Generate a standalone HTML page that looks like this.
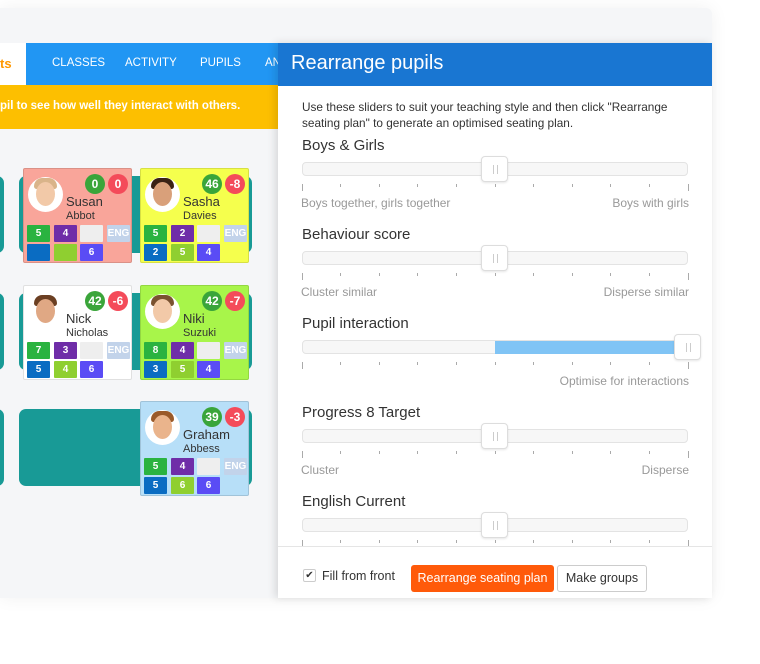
<!DOCTYPE html>
<html><head><meta charset="utf-8"><style>
*{box-sizing:border-box;margin:0;padding:0}
body{width:760px;height:664px;background:#fff;font-family:"Liberation Sans",sans-serif;position:relative;overflow:hidden}
.win{position:absolute;left:0;top:8px;width:712px;height:590px;background:#f5f6f8;box-shadow:0 0 18px rgba(0,0,0,.06);border-radius:0 6px 0 0;overflow:hidden}
.nav{position:absolute;left:0;top:35px;width:712px;height:42px;background:#2196f3}
.nav span{position:absolute;top:14px;color:#fff;font-size:11.5px}
.tab{position:absolute;left:0;top:35px;width:26px;height:42px;background:#fff;color:#ff9800;font-weight:bold;font-size:13px;padding:13px 0 0 0}
.banner{position:absolute;left:0;top:77px;width:280px;height:44px;background:#fdbf00;color:#fff;font-weight:bold;font-size:11.5px;padding:15px 0 0 0;white-space:nowrap}
.tbl{position:absolute;background:#189a96;border-radius:7px}
.card{position:absolute;width:109px;height:95px;border:1px solid rgba(0,0,0,.12);border-radius:2px}
.av{position:absolute;left:4px;top:8px;width:35px;height:35px;border-radius:50%;background:#fff;overflow:hidden}
.av i{position:absolute;left:8px;top:5px;width:19px;height:24px;border-radius:50%;background:#f2c9a8}
.av b{position:absolute;left:6px;top:1px;width:23px;height:11px;border-radius:12px 12px 4px 4px}
.bd{position:absolute;top:5px;width:20px;height:20px;border-radius:50%;color:#fff;font-size:12px;text-align:center;line-height:20px;font-weight:bold}
.g{background:#3aa53a;left:61px}.r{background:#f44b5a;left:84px}
.nm{position:absolute;left:42px;top:25px;font-size:13px;color:#333}
.sn{position:absolute;left:42px;top:41px;font-size:11px;color:#333}
.t{position:absolute;width:23px;height:17px;color:#fff;font-size:10px;font-weight:bold;text-align:center;line-height:17px;border-radius:1px}
.modal{position:absolute;left:278px;top:43px;width:434px;height:555px;background:#fff;box-shadow:-3px 0 8px rgba(0,0,0,.12)}
.mh{height:43px;background:#1976d2;color:#fff;font-size:20px;padding:9px 0 0 13px}
.txt{position:absolute;left:24px;font-size:11.8px;color:#333;line-height:16px}
.h{position:absolute;left:24px;font-size:15px;color:#333}
.tr{position:absolute;left:24px;width:386px;height:14px;background:#f7f7f7;border:1px solid #e3e3e3;border-radius:4px}
.hd{position:absolute;width:27px;height:26px;background:#fff;border:1px solid #ddd;border-radius:4px;box-shadow:0 1px 2px rgba(0,0,0,.1)}
.hd:after{content:"";position:absolute;left:11px;top:8px;width:3px;height:9px;border-left:1px solid #ccc;border-right:1px solid #ccc}
.tk{position:absolute;left:24px;width:388px;height:7px}
.tk s{position:absolute;top:0;width:1px;height:3px;background:#aaa}
.lb{position:absolute;font-size:12px;color:#999}
</style></head><body>
<div class="win">
<div class="nav"><span style="left:52px">CLASSES</span><span style="left:125px">ACTIVITY</span><span style="left:200px">PUPILS</span><span style="left:265px">AN</span></div>
<div class="tab">ts</div>
<div class="banner">pil to see how well they interact with others.</div>
</div>
<div class="tbl" style="left:-10px;top:176px;width:14px;height:77px"></div>
<div class="tbl" style="left:-10px;top:293px;width:14px;height:77px"></div>
<div class="tbl" style="left:-10px;top:409px;width:14px;height:77px"></div>
<div class="tbl" style="left:19px;top:176px;width:233px;height:77px"></div>
<div class="tbl" style="left:19px;top:293px;width:233px;height:77px"></div>
<div class="tbl" style="left:19px;top:409px;width:233px;height:77px"></div>

<div class="card" style="left:23px;top:168px;background:#f9a59a">
<div class="av"><b style="background:#d9b48a"></b><i></i></div><div class="bd g">0</div><div class="bd r">0</div>
<div class="nm">Susan</div><div class="sn">Abbot</div>
<div class="t" style="left:3px;top:56px;background:#2ab340">5</div><div class="t" style="left:30px;top:56px;background:#6f2da8">4</div><div class="t" style="left:56px;top:56px;background:#eee"></div><div class="t" style="left:83px;top:56px;background:#c2d3ea">ENG</div>
<div class="t" style="left:3px;top:75px;background:#0a6cc2"></div><div class="t" style="left:30px;top:75px;background:#8fcf30"></div><div class="t" style="left:56px;top:75px;background:#5a4cf5">6</div>
</div>
<div class="card" style="left:140px;top:168px;background:#f5ff4d">
<div class="av"><b style="background:#3a2214"></b><i style="background:#d9a07a"></i></div><div class="bd g">46</div><div class="bd r">-8</div>
<div class="nm">Sasha</div><div class="sn">Davies</div>
<div class="t" style="left:3px;top:56px;background:#2ab340">5</div><div class="t" style="left:30px;top:56px;background:#6f2da8">2</div><div class="t" style="left:56px;top:56px;background:#eee"></div><div class="t" style="left:83px;top:56px;background:#c2d3ea">ENG</div>
<div class="t" style="left:3px;top:75px;background:#0a6cc2">2</div><div class="t" style="left:30px;top:75px;background:#8fcf30">5</div><div class="t" style="left:56px;top:75px;background:#5a4cf5">4</div>
</div>
<div class="card" style="left:23px;top:285px;background:#fff">
<div class="av"><b style="background:#6b3f22"></b><i style="background:#e0a884"></i></div><div class="bd g">42</div><div class="bd r">-6</div>
<div class="nm">Nick</div><div class="sn">Nicholas</div>
<div class="t" style="left:3px;top:56px;background:#2ab340">7</div><div class="t" style="left:30px;top:56px;background:#6f2da8">3</div><div class="t" style="left:56px;top:56px;background:#eee"></div><div class="t" style="left:83px;top:56px;background:#c2d3ea">ENG</div>
<div class="t" style="left:3px;top:75px;background:#0a6cc2">5</div><div class="t" style="left:30px;top:75px;background:#8fcf30">4</div><div class="t" style="left:56px;top:75px;background:#5a4cf5">6</div>
</div>
<div class="card" style="left:140px;top:285px;background:#a8f54a">
<div class="av"><b style="background:#7a5230"></b><i></i></div><div class="bd g">42</div><div class="bd r">-7</div>
<div class="nm">Niki</div><div class="sn">Suzuki</div>
<div class="t" style="left:3px;top:56px;background:#2ab340">8</div><div class="t" style="left:30px;top:56px;background:#6f2da8">4</div><div class="t" style="left:56px;top:56px;background:#eee"></div><div class="t" style="left:83px;top:56px;background:#c2d3ea">ENG</div>
<div class="t" style="left:3px;top:75px;background:#0a6cc2">3</div><div class="t" style="left:30px;top:75px;background:#8fcf30">5</div><div class="t" style="left:56px;top:75px;background:#5a4cf5">4</div>
</div>
<div class="card" style="left:140px;top:401px;background:#b7dff8">
<div class="av"><b style="background:#9a5a2a"></b><i style="background:#eab48c"></i></div><div class="bd g">39</div><div class="bd r">-3</div>
<div class="nm">Graham</div><div class="sn">Abbess</div>
<div class="t" style="left:3px;top:56px;background:#2ab340">5</div><div class="t" style="left:30px;top:56px;background:#6f2da8">4</div><div class="t" style="left:56px;top:56px;background:#eee"></div><div class="t" style="left:83px;top:56px;background:#c2d3ea">ENG</div>
<div class="t" style="left:3px;top:75px;background:#0a6cc2">5</div><div class="t" style="left:30px;top:75px;background:#8fcf30">6</div><div class="t" style="left:56px;top:75px;background:#5a4cf5">6</div>
</div>

<div class="modal">
<div class="mh">Rearrange pupils</div>
<div class="txt" style="top:56px">Use these sliders to suit your teaching style and then click "Rearrange<br>seating plan" to generate an optimised seating plan.</div>

<div class="h" style="top:94px">Boys &amp; Girls</div>
<div class="tr" style="top:119px"></div><div class="hd" style="left:203px;top:113px"></div>
<div class="tk" style="top:141px"><s style="left:0;height:7px"></s><s style="left:38px"></s><s style="left:77px"></s><s style="left:115px"></s><s style="left:154px"></s><s style="left:193px"></s><s style="left:231px"></s><s style="left:270px"></s><s style="left:308px"></s><s style="left:347px"></s><s style="left:386px;height:7px"></s></div>
<div class="lb" style="left:23px;top:153px">Boys together, girls together</div><div class="lb" style="right:23px;top:153px">Boys with girls</div>

<div class="h" style="top:183px">Behaviour score</div>
<div class="tr" style="top:208px"></div><div class="hd" style="left:203px;top:202px"></div>
<div class="tk" style="top:230px"><s style="left:0;height:7px"></s><s style="left:38px"></s><s style="left:77px"></s><s style="left:115px"></s><s style="left:154px"></s><s style="left:193px"></s><s style="left:231px"></s><s style="left:270px"></s><s style="left:308px"></s><s style="left:347px"></s><s style="left:386px;height:7px"></s></div>
<div class="lb" style="left:23px;top:242px">Cluster similar</div><div class="lb" style="right:23px;top:242px">Disperse similar</div>

<div class="h" style="top:272px">Pupil interaction</div>
<div class="tr" style="top:297px"></div><div style="position:absolute;left:217px;top:298px;width:180px;height:13px;background:#80c4f5"></div><div class="hd" style="left:396px;top:291px"></div>
<div class="tk" style="top:319px"><s style="left:0;height:7px"></s><s style="left:38px"></s><s style="left:77px"></s><s style="left:115px"></s><s style="left:154px"></s><s style="left:193px"></s><s style="left:231px"></s><s style="left:270px"></s><s style="left:308px"></s><s style="left:347px"></s><s style="left:386px;height:7px"></s></div>
<div class="lb" style="right:23px;top:331px">Optimise for interactions</div>

<div class="h" style="top:361px">Progress 8 Target</div>
<div class="tr" style="top:386px"></div><div class="hd" style="left:203px;top:380px"></div>
<div class="tk" style="top:408px"><s style="left:0;height:7px"></s><s style="left:38px"></s><s style="left:77px"></s><s style="left:115px"></s><s style="left:154px"></s><s style="left:193px"></s><s style="left:231px"></s><s style="left:270px"></s><s style="left:308px"></s><s style="left:347px"></s><s style="left:386px;height:7px"></s></div>
<div class="lb" style="left:23px;top:420px">Cluster</div><div class="lb" style="right:23px;top:420px">Disperse</div>

<div class="h" style="top:450px">English Current</div>
<div class="tr" style="top:475px"></div><div class="hd" style="left:203px;top:469px"></div>
<div class="tk" style="top:497px"><s style="left:0;height:7px"></s><s style="left:38px"></s><s style="left:77px"></s><s style="left:115px"></s><s style="left:154px"></s><s style="left:193px"></s><s style="left:231px"></s><s style="left:270px"></s><s style="left:308px"></s><s style="left:347px"></s><s style="left:386px;height:7px"></s></div>

<div style="position:absolute;left:0;top:503px;width:434px;height:52px;background:#fff;border-top:1px solid #e5e5e5">
<div style="position:absolute;left:25px;top:22px;width:13px;height:13px;border:1px solid #ccc;border-radius:2px;font-size:10px;line-height:11px;text-align:center;color:#333">✔</div>
<div style="position:absolute;left:44px;top:22px;font-size:12.5px;color:#333">Fill from front</div>
<div style="position:absolute;left:133px;top:18px;width:143px;height:27px;background:#ff5a0a;border-radius:3px;color:#fff;font-size:12.5px;text-align:center;line-height:27px">Rearrange seating plan</div>
<div style="position:absolute;left:279px;top:18px;width:90px;height:27px;border:1px solid #ccc;border-radius:3px;color:#333;font-size:12.5px;text-align:center;line-height:25px">Make groups</div>
</div>
</div>
</body></html>
